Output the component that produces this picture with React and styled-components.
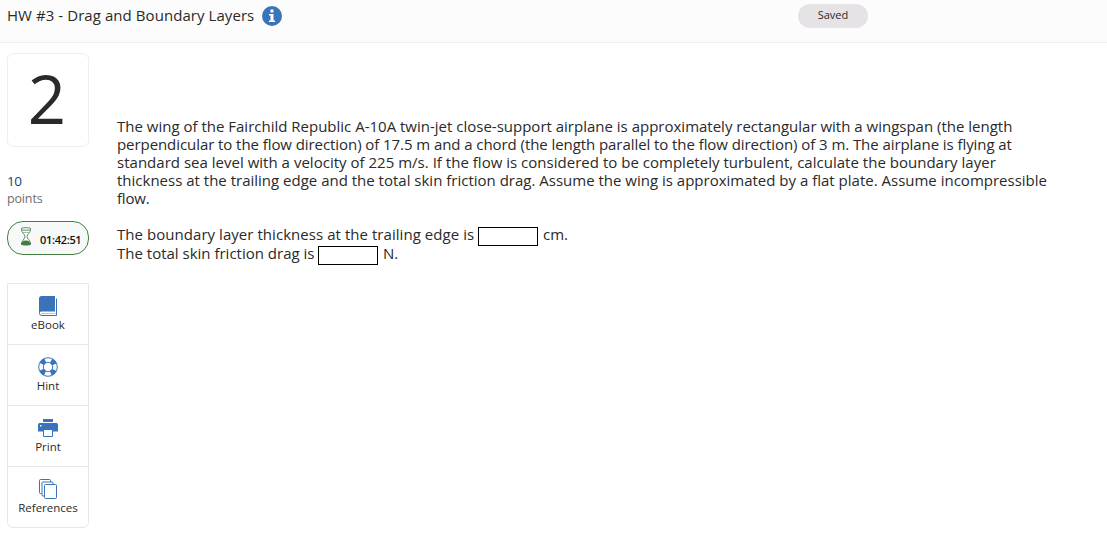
import React from "react";
import styled, { createGlobalStyle } from "styled-components";

const GlobalStyle = createGlobalStyle`
  body {
    margin: 0;
    background: #ffffff;
    color: #2a2a2a;
    font-family: "Open Sans", "Noto Sans", sans-serif;
  }
  * {
    box-sizing: border-box;
  }
`;

const Page = styled.div`
  width: 1107px;
  height: 544px;
  overflow: hidden;
`;

const Header = styled.header`
  display: flex;
  align-items: flex-start;
  height: 43px;
  padding: 4px 239px 0 7px;
  background: #fcfcfc;
  border-bottom: 1px solid #eeeeee;
`;

const Title = styled.h1`
  width: 247px;
  margin: 0;
  font-size: 15px;
  font-weight: 400;
  line-height: 22px;
  letter-spacing: 0.065px;
  white-space: nowrap;
`;

const InfoIcon = styled.svg`
  width: 20px;
  height: 20px;
  margin: 2px 0 0 8px;
`;

const SavedBadge = styled.div`
  width: 70px;
  height: 24px;
  margin-left: auto;
  border-radius: 12px;
  background: #e5e3e6;
  font-size: 11px;
  line-height: 22px;
  text-align: center;
`;

const Content = styled.div`
  display: flex;
  padding: 10px 0 0 7px;
`;

const Sidebar = styled.aside`
  width: 82px;
`;

const QuestionNumber = styled.div`
  height: 94px;
  border: 1px solid #eeeeee;
  border-radius: 6px;
  padding-right: 2px;
  font-size: 67px;
  line-height: 89px;
  text-align: center;
`;

const Points = styled.div`
  margin-top: 26px;
  color: #1b3f7d;
  font-size: 13.5px;
  line-height: 17px;
  letter-spacing: -0.5px;
`;

const PointsLabel = styled.div`
  color: #6e6e6e;
  font-size: 12.5px;
  line-height: 17px;
  letter-spacing: -0.15px;
`;

const Timer = styled.div`
  display: flex;
  height: 34px;
  margin-top: 14px;
  padding: 5px 0 0 12px;
  border: 1px solid #458045;
  border-radius: 16px;
  background: #f6f9f7;
  color: #111111;
  font-size: 11px;
  font-weight: 600;
  line-height: 25px;
  letter-spacing: -0.3px;
`;

const Hourglass = styled.svg`
  width: 12px;
  height: 19px;
  margin-right: 8px;
`;

const Tools = styled.nav`
  height: 245px;
  margin-top: 28px;
  border: 1px solid #e8e8e8;
  border-radius: 0 0 6px 6px;
`;

const Tool = styled.div`
  display: flex;
  flex-direction: column;
  align-items: center;
  height: 61px;
  padding-top: 12px;
  border-bottom: ${(props) => (props.$last ? "none" : "1px solid #e8e8e8")};
  font-size: 11.5px;
  line-height: 17px;
`;

const ToolIcon = styled.svg`
  width: 20px;
  height: 20px;
`;

const Question = styled.main`
  padding: 64px 0 0 28px;
  font-size: 15px;
  line-height: 18px;
`;

const Line = styled.div`
  height: 18px;
  white-space: nowrap;
  letter-spacing: ${(props) => props.$spacing || "0"};
`;

const Answers = styled.div`
  margin-top: 18px;
`;

const AnswerRow = styled.label`
  display: flex;
  height: ${(props) => props.$height};
  white-space: nowrap;
`;

const AnswerText = styled.span`
  width: ${(props) => props.$width};
  letter-spacing: ${(props) => props.$spacing || "0"};
`;

const AnswerInput = styled.input`
  width: 60px;
  height: 19px;
  margin: 2px 5px 0 0;
  border: 1px solid #000000;
  border-radius: 0;
  padding: 0 4px;
  background: #ffffff;
`;

const BookIcon = () => (
  <ToolIcon viewBox="0 0 20 20">
    <path d="M3.500 0H17v15.500H3.500A2 2 0 0 0 1.500 17.500H1V2.500A2.500 2.500 0 0 1 3.500 0Z" fill="#3a74b8" />
    <path d="M1.500 16.500v.8a2.200 2.200 0 0 0 2.200 2.200h14.800V2.500" fill="none" stroke="#3a74b8" />
    <path d="M3.500 17.500h14" stroke="#9dbadb" strokeWidth="0.800" />
  </ToolIcon>
);

const HintIcon = () => (
  <ToolIcon viewBox="0 0 20 20" fill="none">
    <circle
      cx="10"
      cy="10"
      r="7"
      stroke="#3a74b8"
      strokeWidth="5"
      strokeDasharray="5 5.996"
      strokeDashoffset="-3"
    />
    <circle cx="10" cy="10" r="9.300" stroke="#3a74b8" strokeWidth="1" />
    <circle cx="10" cy="10" r="4.700" stroke="#3a74b8" strokeWidth="1" />
  </ToolIcon>
);

const PrintIcon = () => (
  <ToolIcon viewBox="0 0 20 20">
    <path d="M5 1h10v3H5z" fill="#3a74b8" />
    <path d="M1.500 5h17a1.500 1.500 0 0 1 1.500 1.500V13.500H0V6.500A1.500 1.500 0 0 1 1.500 5Z" fill="#3a74b8" />
    <path d="M5.500 11.500h9v7h-9z" fill="#ffffff" stroke="#3a74b8" />
    <path d="M2 7h1.500v1.500H2z" fill="#ffffff" />
  </ToolIcon>
);

const ReferencesIcon = () => (
  <ToolIcon viewBox="0 0 20 20" fill="#ffffff" stroke="#3a74b8">
    <rect x="1.500" y="0.500" width="11" height="14" rx="1" />
    <rect x="4" y="3" width="11" height="14" rx="1" />
    <rect x="6.500" y="5.500" width="12" height="14" rx="1" />
  </ToolIcon>
);

const App = () => {
  return (
    <Page>
      <GlobalStyle />
      <Header>
        <Title>HW #3 - Drag and Boundary Layers</Title>
        <InfoIcon viewBox="0 0 20 20">
          <circle cx="10" cy="10" r="10" fill="#3a74b8" />
          <path d="M8.500 3.500h3v3h-3zM7 8h4.500v6.500H13V16H7v-1.500h1.500v-5H7z" fill="#ffffff" />
        </InfoIcon>
        <SavedBadge>Saved</SavedBadge>
      </Header>

      <Content>
        <Sidebar>
          <QuestionNumber>2</QuestionNumber>
          <Points>10</Points>
          <PointsLabel>points</PointsLabel>
          <Timer>
            <Hourglass viewBox="0 0 12 19" fill="none" stroke="#5b8a62">
              <path d="M1.500 2C1.500 6 5 7 5 9.500s-3.500 4-3.500 7.500h9C10.500 13 7 12 7 9.500S10.500 6 10.500 2" fill="#ffffff" />
              <ellipse cx="6" cy="2" rx="5" ry="1.300" fill="#ffffff" />
              <path d="M3 5.500h6" stroke="#a8bba8" />
              <path d="M1 17.500c0-2.500 3-4 5-4s5 1.500 5 4c-2 1.300-8 1.300-10 0z" fill="#3f7d42" stroke="none" />
            </Hourglass>
            01:42:51
          </Timer>

          <Tools>
            <Tool>
              <BookIcon />
              eBook
            </Tool>
            <Tool>
              <HintIcon />
              Hint
            </Tool>
            <Tool>
              <PrintIcon />
              Print
            </Tool>
            <Tool $last>
              <ReferencesIcon />
              References
            </Tool>
          </Tools>
        </Sidebar>

        <Question>
          <Line>
            The wing of the Fairchild Republic A-10A twin-jet close-support airplane is approximately rectangular with a wingspan (the length
          </Line>
          <Line $spacing="-0.07px">
            perpendicular to the flow direction) of 17.5 m and a chord (the length parallel to the flow direction) of 3 m. The airplane is flying at
          </Line>
          <Line $spacing="0.017px">
            standard sea level with a velocity of 225 m/s. If the flow is considered to be completely turbulent, calculate the boundary layer
          </Line>
          <Line>
            thickness at the trailing edge and the total skin friction drag. Assume the wing is approximated by a flat plate. Assume incompressible
          </Line>
          <Line $spacing="-0.2px">flow.</Line>
          <Answers>
            <AnswerRow $height="19px">
              <AnswerText $width="361px" $spacing="0.05px">The boundary layer thickness at the trailing edge is</AnswerText>
              <AnswerInput />
              <AnswerText>cm.</AnswerText>
            </AnswerRow>
            <AnswerRow $height="20px">
              <AnswerText $width="201px">The total skin friction drag is</AnswerText>
              <AnswerInput />
              <AnswerText>N.</AnswerText>
            </AnswerRow>
          </Answers>
        </Question>
      </Content>
    </Page>
  );
};

export default App;
